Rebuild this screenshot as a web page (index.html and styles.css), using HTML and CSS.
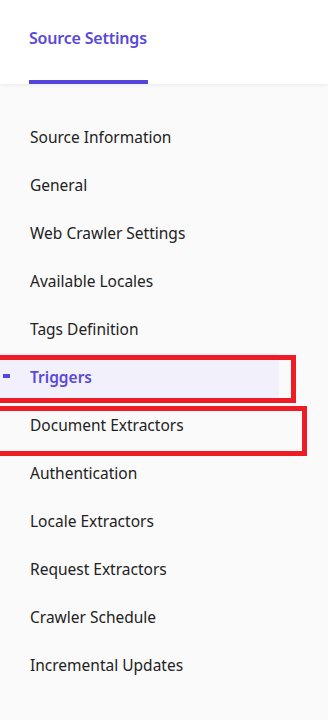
FILE: index.html
```html
<!DOCTYPE html>
<html>
<head>
<meta charset="utf-8">
<link rel="stylesheet" href="styles.css">
</head>
<body>
<div class="page">
  <header class="tabs">
    <div class="tab active">Source Settings</div>
  </header>
  <nav class="menu">
    <div class="item">Source Information</div>
    <div class="item">General</div>
    <div class="item">Web Crawler Settings</div>
    <div class="item">Available Locales</div>
    <div class="item">Tags Definition</div>
    <div class="item selected"><span class="marker"></span>Triggers</div>
    <div class="item">Document Extractors</div>
    <div class="item">Authentication</div>
    <div class="item">Locale Extractors</div>
    <div class="item">Request Extractors</div>
    <div class="item">Crawler Schedule</div>
    <div class="item">Incremental Updates</div>
  </nav>
  <div class="annot annot-1"></div>
  <div class="annot annot-2"></div>
</div>
</body>
</html>
```
FILE: styles.css
```css
html, body {
  margin: 0;
  padding: 0;
}
body {
  font-family: "Noto Sans", "Open Sans", sans-serif;
  background: #fafafa;
  width: 328px;
  height: 720px;
  overflow: hidden;
}
.page {
  position: relative;
  height: 720px;
}
.tabs {
  background: #ffffff;
  height: 84px;
  padding-left: 29px;
  display: flex;
  align-items: stretch;
  box-shadow: 0 1px 4px rgba(0, 0, 0, 0.07);
  position: relative;
  z-index: 1;
}
.tab {
  width: 119px;
  box-sizing: border-box;
  padding-top: 27px;
  font-size: 16px;
  font-weight: 600;
  color: #5a48d8;
  border-bottom: 4px solid #5146d9;
  white-space: nowrap;
  letter-spacing: -0.2px;
}
.menu {
  padding-top: 29px;
  display: flex;
  flex-direction: column;
}
.item {
  position: relative;
  height: 48px;
  width: 279px;
  display: flex;
  align-items: center;
  padding-left: 30px;
  box-sizing: border-box;
  font-size: 15.5px;
  color: #222222;
}
.item.selected {
  background: #f1f0fb;
  color: #5a48d8;
  font-weight: 600;
}
.marker {
  position: absolute;
  left: 3px;
  top: 21px;
  width: 7px;
  height: 4px;
  background: #5146d9;
}
.annot {
  position: absolute;
  left: -5px;
  border: 5px solid #ee1c25;
  box-sizing: border-box;
  z-index: 2;
}
.annot-1 {
  top: 355px;
  width: 301px;
  height: 48px;
}
.annot-2 {
  top: 406px;
  width: 312px;
  height: 50px;
}
```
